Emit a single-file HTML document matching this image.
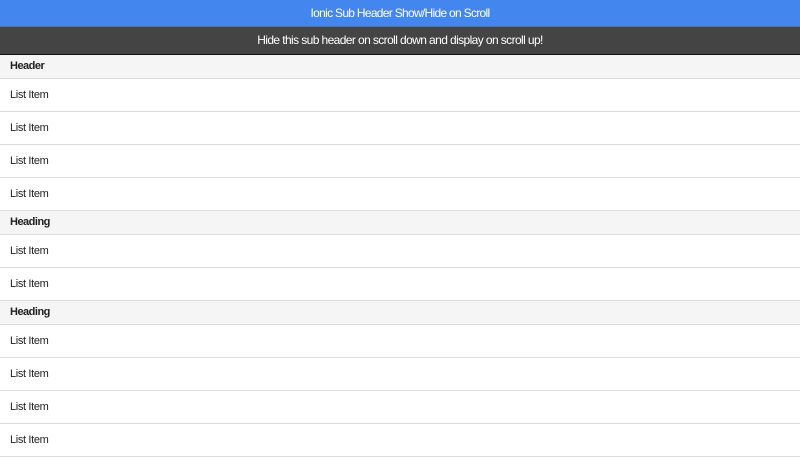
<!DOCTYPE html>
<html><head><meta charset="utf-8"><style>
*{margin:0;padding:0;box-sizing:border-box}
body{width:800px;height:450px;overflow:hidden;font-family:"Liberation Sans",Arial,sans-serif;background:#fff;color:#222}
.bar{height:27px;background:#4387ee;border-bottom:1px solid #3a74d0;color:#fff;font-size:12px;letter-spacing:-0.7px;text-align:center;line-height:26px}
.sub{height:28px;background:#444;border-bottom:1px solid #111;color:#fff;font-size:12px;letter-spacing:-0.6px;text-align:center;line-height:27px}
.div{height:24px;background:#f5f5f5;border-bottom:1px solid #ddd;font-weight:bold;font-size:11px;letter-spacing:-0.5px;padding-left:10px;line-height:23px;color:#222}
.item{height:33px;border-bottom:1px solid #ddd;font-size:11px;letter-spacing:-0.35px;padding-left:10px;line-height:32px;color:#222}
</style></head><body>
<div class="bar">Ionic Sub Header Show/Hide on Scroll</div>
<div class="sub">Hide this sub header on scroll down and display on scroll up!</div>
<div class="div">Header</div>
<div class="item">List Item</div>
<div class="item">List Item</div>
<div class="item">List Item</div>
<div class="item">List Item</div>
<div class="div">Heading</div>
<div class="item">List Item</div>
<div class="item">List Item</div>
<div class="div">Heading</div>
<div class="item">List Item</div>
<div class="item">List Item</div>
<div class="item">List Item</div>
<div class="item">List Item</div>
</body></html>
